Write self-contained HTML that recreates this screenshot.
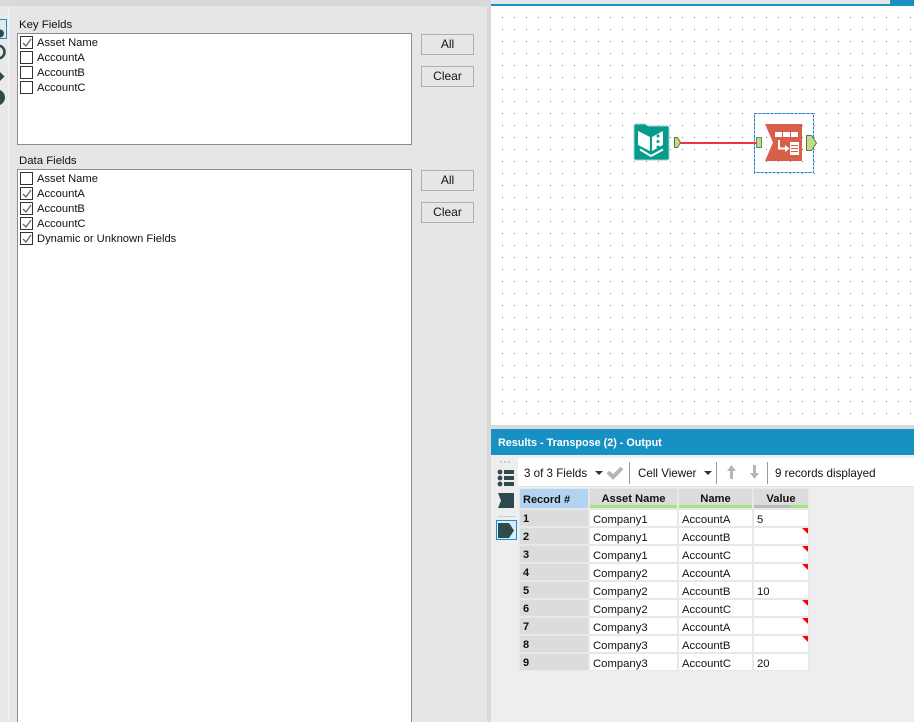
<!DOCTYPE html>
<html><head><meta charset="utf-8"><style>
html,body{margin:0;padding:0;width:914px;height:722px;overflow:hidden;background:#e6e6e6}
body{position:relative;font-family:"Liberation Sans",sans-serif;font-size:11.2px;color:#111}
div{position:absolute;box-sizing:border-box}
.t{white-space:nowrap;line-height:15px}
.lb{background:#fff;border:1px solid #8c8c8c}
.cb{left:20px;width:13px;height:13px;border:1px solid #333;background:#fff}
.btn{left:421px;width:53px;height:21px;border:1px solid #adadad;background:#e6e6e6;outline:1px solid #e9e9e9;outline-offset:-2px;text-align:center;line-height:19px;font-size:12px}
.rn{left:520px;width:68px;height:16px;background:#dcdcdc;font-weight:bold;font-size:11px;line-height:19px;padding-left:3px}
.c{height:16px;background:#fff;font-size:11.3px;line-height:20px;padding-left:3px;white-space:nowrap}
.h{top:489px;height:19px;background:#dcdcdc;border-bottom:3px solid #a3e680;font-weight:bold;font-size:11.2px;line-height:21px;text-align:center}
.tri{width:0;height:0;border-top:6px solid #f00;border-left:6px solid transparent}
</style></head><body>
<div style="left:0;top:0;width:914px;height:6px;background:#d9d9d9"></div>
<div style="left:0;top:6px;width:9px;height:716px;background:#e9e9e9;border-right:1px solid #f2f2f2"></div>
<div style="left:0;top:19px;width:7px;height:20px;border:1px solid #1a8fd0;border-left:none;background:#e3e8ec"></div>
<svg style="position:absolute;left:0;top:0" width="9" height="120" viewBox="0 0 9 120">
<circle cx="0" cy="33.500" r="4" fill="#2f4a4d"/>
<circle cx="-2" cy="52" r="6.500" fill="none" stroke="#2f4a4d" stroke-width="2.500"/>
<path d="M0 72 L4.500 76.500 L0 81z" fill="#2f4a4d"/>
<circle cx="-3" cy="97.500" r="8" fill="#2f4a4d"/>
</svg>

<div class="t" style="left:19px;top:18px;font-size:11.400px">Key Fields</div>
<div class="lb" style="left:17px;top:33px;width:395px;height:112px"></div>
<div class="cb" style="top:36px"></div><div class="t" style="left:37px;top:36px">Asset Name</div>
<div class="cb" style="top:51px"></div><div class="t" style="left:37px;top:51px">AccountA</div>
<div class="cb" style="top:66px"></div><div class="t" style="left:37px;top:66px">AccountB</div>
<div class="cb" style="top:81px"></div><div class="t" style="left:37px;top:81px">AccountC</div>
<div class="btn" style="top:34px">All</div>
<div class="btn" style="top:66px">Clear</div>

<div class="t" style="left:19px;top:154px;font-size:11.400px">Data Fields</div>
<div class="lb" style="left:17px;top:169px;width:395px;height:560px"></div>
<div class="cb" style="top:172px"></div><div class="t" style="left:37px;top:172px">Asset Name</div>
<div class="cb" style="top:187px"></div><div class="t" style="left:37px;top:187px">AccountA</div>
<div class="cb" style="top:202px"></div><div class="t" style="left:37px;top:202px">AccountB</div>
<div class="cb" style="top:217px"></div><div class="t" style="left:37px;top:217px">AccountC</div>
<div class="cb" style="top:232px"></div><div class="t" style="left:37px;top:232px">Dynamic or Unknown Fields</div>
<div class="btn" style="top:170px">All</div>
<div class="btn" style="top:202px">Clear</div>
<svg style="position:absolute;left:0;top:0" width="40" height="250" viewBox="0 0 40 250" fill="none" stroke="#666" stroke-width="1.300">
<path d="M23 43 l3 3 l5 -7"/><path d="M23 194 l3 3 l5 -7"/><path d="M23 209 l3 3 l5 -7"/><path d="M23 224 l3 3 l5 -7"/><path d="M23 239 l3 3 l5 -7"/>
</svg>

<div style="left:487px;top:0;width:4px;height:722px;background:#d9d9d9"></div>
<div style="left:491px;top:6px;width:423px;height:419px;background:#fff"></div>
<div style="left:491px;top:4px;width:423px;height:2px;background:#1790c4"></div>
<div style="left:890px;top:0;width:24px;height:4px;background:#1790c4"></div>
<div style="left:491px;top:0;width:399px;height:4px;background:#e6e6e6"></div>
<svg style="position:absolute;left:491px;top:6px" width="423" height="419">
<defs><pattern id="d" x="11" y="11" width="12" height="12" patternUnits="userSpaceOnUse"><rect width="1" height="1" fill="#808080"/></pattern></defs>
<rect width="423" height="419" fill="url(#d)"/>
</svg>
<svg style="position:absolute;left:620px;top:100px" width="210" height="85" viewBox="0 0 210 85">
<rect x="134.500" y="13.500" width="59" height="59" fill="none" stroke="#1a80c8" stroke-width="1" stroke-dasharray="3 1"/>
<path d="M14 26 a2 2 0 0 1 2-2 h9 l3 2 h19 a2 2 0 0 1 2 2 v30 a2 2 0 0 1 -2 2 h-31 a2 2 0 0 1 -2-2z" fill="#069c8c" stroke="#9fd4cc" stroke-width="1"/>
<path d="M18 31 L30 37 V51 L18 45z M32 37 L43 31 V45 L32 51z" fill="#fff"/>
<circle cx="38" cy="36" r="1.500" fill="#069c8c"/><circle cx="38" cy="41.500" r="1.500" fill="#069c8c"/><circle cx="38" cy="47" r="1.500" fill="#069c8c"/>
<path d="M20 49.500 L31 56 L43 49.500" fill="none" stroke="#fff" stroke-width="2"/>
<path d="M54.500 37.500 h3 l3 5 l-3 5 h-3z" fill="#c3dc7f" stroke="#4d7a5e" stroke-width="1"/>
<path d="M136.500 37.500 h5 v10 h-5z" fill="#c3dc7f" stroke="#5d8a6e" stroke-width="1"/>
<rect x="60" y="42" width="77" height="2" fill="#ef3340"/>
<path d="M145 24 h37 v37 h-37 l8-18.500z" fill="#d8604a"/>
<path d="M155 32 h7 v5 h-7z M163 32 h7 v5 h-7z M171 32 h7 v5 h-7z" fill="#fff"/>
<path d="M159 40 v8.500 h8" fill="none" stroke="#fff" stroke-width="2"/><path d="M165 45 l4.500 3.500 l-4.500 3.500z" fill="#fff"/>
<path d="M170 42 h9 v13 h-9z" fill="#fff"/><path d="M171 45.500 h7 M171 48.500 h7 M171 51.500 h7" stroke="#d8604a" stroke-width="1"/>
<path d="M186.500 35.500 h5 l5 7.500 l-5 7.500 h-5z" fill="#c3dc7f" stroke="#4d7a5e" stroke-width="1"/>
</svg>

<div style="left:491px;top:425px;width:423px;height:4px;background:#d9d9d9"></div>
<div style="left:491px;top:429px;width:423px;height:26px;background:#1790c4"></div>
<div class="t" style="left:498px;top:436px;color:#fff;font-weight:bold;font-size:10.800px">Results - Transpose (2) - Output</div>
<div style="left:491px;top:455px;width:423px;height:267px;background:#eee"></div>
<div style="left:518px;top:458px;width:396px;height:29px;background:#fff;border-bottom:1px solid #e4e4e4"></div>
<div style="left:519px;top:488px;width:290px;height:183px;background:#e8e8e8"></div>
<svg style="position:absolute;left:491px;top:455px" width="30" height="90" viewBox="0 0 30 90">
<path d="M9 7 h2 M13 7 h2 M17 7 h2" stroke="#aaa" stroke-width="1"/>
<g fill="#2f4a4d"><circle cx="9" cy="17" r="2.400"/><circle cx="9" cy="23" r="2.400"/><circle cx="9" cy="29" r="2.400"/>
<rect x="13" y="15" width="10" height="4"/><rect x="13" y="21" width="10" height="4"/><rect x="13" y="27" width="10" height="4"/>
<path d="M7 38 h16 v15 h-16 l3 -7.500z"/></g>
<path d="M7 61.500 h17" stroke="#ccc"/>
<rect x="5.500" y="65.500" width="20" height="19" fill="#dcecf8" stroke="#1a8fd0"/>
<path d="M7 68 h11 l5 7.500 l-5 7.500 h-11z" fill="#2f4a4d"/>
</svg>
<div class="t" style="left:524px;top:466px;font-size:11.600px">3 of 3 Fields</div>
<svg style="position:absolute;left:519px;top:459px" width="395" height="28" viewBox="0 0 395 28">
<path d="M76 12 h8 l-4 4z M185 12 h8 l-4 4z" fill="#333"/>
<path d="M89 13 L94 18 L103 9" fill="none" stroke="#b5b5b5" stroke-width="4"/>
<path d="M110.500 3 v22 M197.500 3 v22 M248.500 3 v22" stroke="#999" stroke-width="1"/>
<path d="M212.500 6 l4.500 6 h-3 v8 h-3 v-8 h-3z M235.500 20 l-4.500-6 h3 v-8 h3 v8 h3z" fill="#b5b5b5"/>
</svg>
<div class="t" style="left:638px;top:466px;font-size:11.600px">Cell Viewer</div>
<div class="t" style="left:775px;top:466px;font-size:11.600px">9 records displayed</div>

<div style="left:520px;top:489px;width:68px;height:19px;background:#b3d4f0;font-weight:bold;font-size:11px;line-height:22px;padding-left:3px">Record #</div>
<div class="h" style="left:590px;width:87px">Asset Name</div>
<div class="h" style="left:679px;width:73px">Name</div>
<div class="h" style="left:754px;width:54px;border-bottom-color:#bbb">Value</div>
<div style="left:790px;top:505px;width:18px;height:3px;background:#a3e680"></div>

<div class="rn" style="top:510px">1</div><div class="c" style="left:590px;top:510px;width:87px">Company1</div><div class="c" style="left:679px;top:510px;width:73px">AccountA</div><div class="c" style="left:754px;top:510px;width:54px">5</div>
<div class="rn" style="top:528px">2</div><div class="c" style="left:590px;top:528px;width:87px">Company1</div><div class="c" style="left:679px;top:528px;width:73px">AccountB</div><div class="c" style="left:754px;top:528px;width:54px"></div>
<div class="rn" style="top:546px">3</div><div class="c" style="left:590px;top:546px;width:87px">Company1</div><div class="c" style="left:679px;top:546px;width:73px">AccountC</div><div class="c" style="left:754px;top:546px;width:54px"></div>
<div class="rn" style="top:564px">4</div><div class="c" style="left:590px;top:564px;width:87px">Company2</div><div class="c" style="left:679px;top:564px;width:73px">AccountA</div><div class="c" style="left:754px;top:564px;width:54px"></div>
<div class="rn" style="top:582px">5</div><div class="c" style="left:590px;top:582px;width:87px">Company2</div><div class="c" style="left:679px;top:582px;width:73px">AccountB</div><div class="c" style="left:754px;top:582px;width:54px">10</div>
<div class="rn" style="top:600px">6</div><div class="c" style="left:590px;top:600px;width:87px">Company2</div><div class="c" style="left:679px;top:600px;width:73px">AccountC</div><div class="c" style="left:754px;top:600px;width:54px"></div>
<div class="rn" style="top:618px">7</div><div class="c" style="left:590px;top:618px;width:87px">Company3</div><div class="c" style="left:679px;top:618px;width:73px">AccountA</div><div class="c" style="left:754px;top:618px;width:54px"></div>
<div class="rn" style="top:636px">8</div><div class="c" style="left:590px;top:636px;width:87px">Company3</div><div class="c" style="left:679px;top:636px;width:73px">AccountB</div><div class="c" style="left:754px;top:636px;width:54px"></div>
<div class="rn" style="top:654px">9</div><div class="c" style="left:590px;top:654px;width:87px">Company3</div><div class="c" style="left:679px;top:654px;width:73px">AccountC</div><div class="c" style="left:754px;top:654px;width:54px">20</div>

<div class="tri" style="left:802px;top:528px"></div>
<div class="tri" style="left:802px;top:546px"></div>
<div class="tri" style="left:802px;top:564px"></div>
<div class="tri" style="left:802px;top:600px"></div>
<div class="tri" style="left:802px;top:618px"></div>
<div class="tri" style="left:802px;top:636px"></div>
</body></html>
